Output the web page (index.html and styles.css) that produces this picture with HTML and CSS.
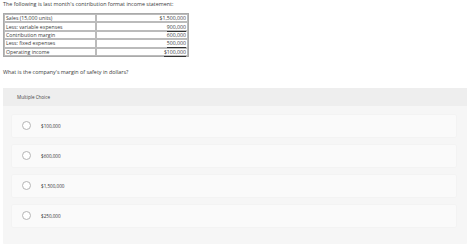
FILE: index.html
```html
<!DOCTYPE html>
<html>
<head>
<meta charset="utf-8">
<link rel="stylesheet" href="styles.css">
</head>
<body>
<div class="page">
  <p class="intro">The following is last month's contribution format income statement:</p>
  <table class="stmt">
    <tr><td class="lbl">Sales (15,000 units)</td><td class="num">$1,500,000</td></tr>
    <tr><td class="lbl">Less: variable expenses</td><td class="num"><span class="ul">900,000</span></td></tr>
    <tr><td class="lbl">Contribution margin</td><td class="num">600,000</td></tr>
    <tr><td class="lbl">Less: fixed expenses</td><td class="num"><span class="ul">500,000</span></td></tr>
    <tr><td class="lbl">Operating income</td><td class="num"><span class="dul">$100,000</span></td></tr>
  </table>
  <p class="question">What is the company's margin of safety in dollars?</p>
  <div class="mc">
    <div class="mc-head">Multiple Choice</div>
    <div class="mc-body">
      <div class="opt"><span class="radio"></span><span class="opt-text">$100,000</span></div>
      <div class="opt"><span class="radio"></span><span class="opt-text">$600,000</span></div>
      <div class="opt"><span class="radio"></span><span class="opt-text">$1,500,000</span></div>
      <div class="opt"><span class="radio"></span><span class="opt-text">$250,000</span></div>
    </div>
  </div>
</div>
</body>
</html>
```
FILE: styles.css
```css
html, body {
  margin: 0;
  padding: 0;
  background: #ffffff;
}
body {
  font-family: "Open Sans", "Liberation Sans", sans-serif;
  color: #3a3a3a;
}
.page {
  padding: 1px 7px 0 3px;
}
.intro {
  margin: 0;
  font-size: 5.4px;
  line-height: 7px;
}
.stmt {
  margin-top: 5px;
  width: 186px;
  border-collapse: separate;
  border-spacing: 0;
  border: 1px solid #aaaaaa;
  font-size: 5.2px;
}
.stmt td {
  border: 0.5px solid #bbbbbb;
  padding: 0 1px;
  height: 6.4px;
  line-height: 6px;
}
.stmt .lbl {
  width: 50%;
}
.stmt .num {
  text-align: right;
}
.ul {
  border-bottom: 0.5px solid #333;
}
.dul {
  border-bottom: 1.5px double #333;
}
.question {
  margin: 12px 0 0 0;
  font-size: 5.4px;
  line-height: 7px;
}
.mc {
  margin-top: 12px;
  width: 464px;
  background: #f6f6f6;
  border-radius: 1px;
}
.mc-head {
  background: #eeeeee;
  height: 18px;
  padding-left: 14px;
  font-size: 4.6px;
  line-height: 18px;
  color: #444;
}
.mc-body {
  display: flex;
  flex-direction: column;
  gap: 8px;
  padding: 9px 11px 17px 9px;
}
.opt {
  display: flex;
  align-items: center;
  height: 22px;
  background: #fafafa;
  box-shadow: 0 0 2px rgba(0,0,0,0.06);
  border-radius: 1px;
  padding-left: 10px;
}
.radio {
  width: 7px;
  height: 7px;
  border: 1px solid #b5b5b5;
  border-radius: 50%;
  background: #fff;
  flex: none;
}
.opt-text {
  margin-left: 10px;
  font-size: 4.6px;
  color: #333;
}
```
